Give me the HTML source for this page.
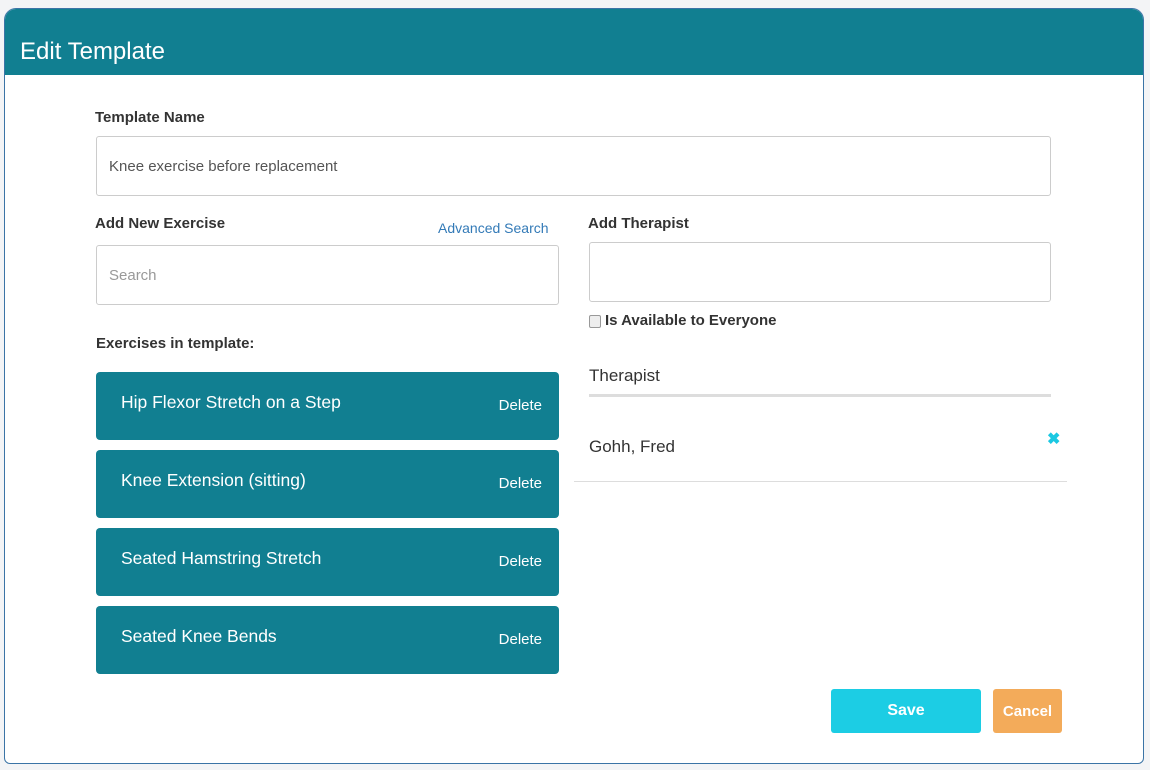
<!DOCTYPE html>
<html><head><style>
*{box-sizing:border-box;margin:0;padding:0}
body{width:1150px;height:770px;background:#f3f4f6;font-family:"Liberation Sans",sans-serif;position:relative;overflow:hidden;color:#333}
.modal{position:absolute;left:4px;top:8px;width:1140px;height:756px;background:#fff;border:1px solid #3b74a6;border-radius:12px 12px 6px 6px;overflow:hidden}
.hdr{position:absolute;left:0;top:0;right:0;height:66px;background:#117f91;color:#fff;font-size:24px;padding:28px 0 0 15px;line-height:30px}
.a{position:absolute}
.lbl{font-size:15px;font-weight:bold;color:#333}
.inp{border:1px solid #ccc;border-radius:3px;background:#fff;font-size:15px;color:#555;padding-left:12px;display:flex;align-items:center}
.ex{position:absolute;left:96px;width:463px;height:68px;background:#117f91;border-radius:4px;color:#fff}
.ex .t{position:absolute;left:25px;top:20px;font-size:17.5px}
.ex .d{position:absolute;right:17px;top:25px;font-size:15px}
.btn{position:absolute;top:689px;height:44px;border-radius:3px;color:#fff;font-weight:bold;font-size:16px;display:flex;align-items:center;justify-content:center}
</style></head><body>
<div class="modal"><div class="hdr">Edit Template</div></div>
<div class="a lbl" style="left:95px;top:109px">Template Name</div>
<div class="a inp" style="left:96px;top:136px;width:955px;height:60px">Knee exercise before replacement</div>
<div class="a lbl" style="left:95px;top:215px">Add New Exercise</div>
<div class="a" style="left:438px;top:220px;font-size:14px;color:#337ab7">Advanced Search</div>
<div class="a inp" style="left:96px;top:245px;width:463px;height:60px;color:#999">Search</div>
<div class="a lbl" style="left:96px;top:335px">Exercises in template:</div>
<div class="ex" style="top:372px"><span class="t">Hip Flexor Stretch on a Step</span><span class="d">Delete</span></div>
<div class="ex" style="top:450px"><span class="t">Knee Extension (sitting)</span><span class="d">Delete</span></div>
<div class="ex" style="top:528px"><span class="t">Seated Hamstring Stretch</span><span class="d">Delete</span></div>
<div class="ex" style="top:606px"><span class="t">Seated Knee Bends</span><span class="d">Delete</span></div>
<div class="a lbl" style="left:588px;top:215px">Add Therapist</div>
<div class="a inp" style="left:589px;top:242px;width:462px;height:60px"></div>
<div class="a" style="left:589px;top:315px;width:12px;height:13px;border:1px solid #999;border-radius:2px;background:#eee"></div>
<div class="a lbl" style="left:605px;top:312px">Is Available to Everyone</div>
<div class="a" style="left:589px;top:366px;font-size:17px;color:#333">Therapist</div>
<div class="a" style="left:589px;top:394px;width:462px;height:3px;background:#ddd"></div>
<div class="a" style="left:589px;top:437px;font-size:17px;color:#333">Gohh, Fred</div>
<div class="a" style="left:1047px;top:429px;font-size:16px;font-weight:bold;color:#1bc8e2">✖</div>
<div class="a" style="left:574px;top:481px;width:493px;height:1px;background:#ddd"></div>
<div class="btn" style="left:831px;width:150px;background:#1ccde4">Save</div>
<div class="btn" style="left:993px;width:69px;background:#f3ab5a;font-size:15px">Cancel</div>
</body></html>
